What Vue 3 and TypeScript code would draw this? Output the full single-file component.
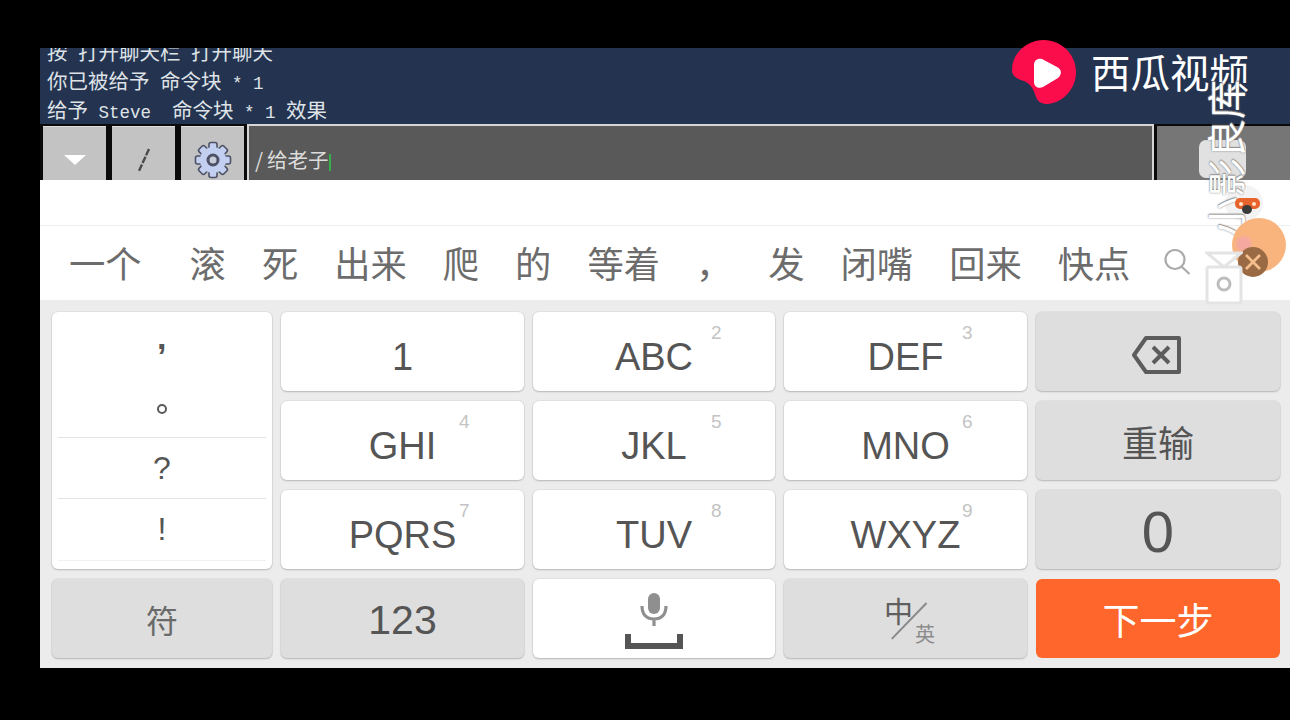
<script setup lang="ts">
interface Cand { t: string; extra?: boolean }
const candidates: Cand[] = [
  { t: '一个', extra: true }, { t: '滚' }, { t: '死' }, { t: '出来' }, { t: '爬' }, { t: '的' },
  { t: '等着' }, { t: '，' }, { t: '发' }, { t: '闭嘴' }, { t: '回来' }, { t: '快点' }
]
interface K { label: string; num?: string }
const row1: K[] = [{ label: '1' }, { label: 'ABC', num: '2' }, { label: 'DEF', num: '3' }]
const row2: K[] = [{ label: 'GHI', num: '4' }, { label: 'JKL', num: '5' }, { label: 'MNO', num: '6' }]
const row3: K[] = [{ label: 'PQRS', num: '7' }, { label: 'TUV', num: '8' }, { label: 'WXYZ', num: '9' }]
const gear = Array.from({ length: 8 }, (_, i) => i * 45)
</script>

<template>
  <div class="page">
    <div class="screen">
      <section class="game">
        <div class="chat">
          <div class="line">按<span class="la">&nbsp;</span>打开聊天栏<span class="la">&nbsp;</span>打开聊天</div>
          <div class="line">你已被给予<span class="la">&nbsp;</span>命令块<span class="la">&nbsp;*&nbsp;1</span></div>
          <div class="line">给予<span class="la">&nbsp;Steve&nbsp;&nbsp;</span>命令块<span class="la">&nbsp;*&nbsp;1&nbsp;</span>效果</div>
        </div>
        <div class="toolbar">
          <div class="mc-btn">
            <svg width="24" height="12" viewBox="0 0 24 12"><path d="M1 1h22L12 11z" fill="#fff" /></svg>
          </div>
          <div class="mc-btn">
            <svg width="14" height="26" viewBox="0 0 14 26"><path d="M12 2 2 24" stroke="#4a4a4a" stroke-width="2.4" stroke-dasharray="7 1.5" /></svg>
          </div>
          <div class="mc-btn">
            <svg width="38" height="38" viewBox="0 0 38 38">
              <g fill="#c3cff0" stroke="#4d5166" stroke-width="1.6">
                <rect v-for="a in gear" :key="a" x="15" y="1.5" width="8" height="8" rx="2" :transform="`rotate(${a} 19 19)`" />
              </g>
              <circle cx="19" cy="19" r="13" fill="#c3cff0" />
              <circle cx="19" cy="19" r="5" fill="#c8ccd8" stroke="#4d5166" stroke-width="3" />
            </svg>
          </div>
          <div class="input"><span class="sl">/</span>给老子<span class="caret"></span></div>
          <div class="send"></div>
        </div>
      </section>

      <section class="keyboard">
        <div class="preedit"></div>
        <div class="candidates">
          <span v-for="c in candidates" :key="c.t" class="cand" :class="{ first: c.extra }">{{ c.t }}</span>
          <svg class="search" width="30" height="30" viewBox="0 0 30 30" fill="none" stroke="#a9a9a9" stroke-width="2.2">
            <circle cx="13" cy="12.5" r="9.5" /><path d="m20 20 7.5 7" />
          </svg>
        </div>
        <div class="keys">
          <div class="key light punct">
            <div class="p-top"><span class="p-comma">,</span><span class="p-dot" aria-label="。"></span></div>
            <div class="p-cell">?</div>
            <div class="p-cell last">!</div>
          </div>
          <div v-for="k in row1" :key="k.label" class="key light">
            <span class="label">{{ k.label }}</span><span v-if="k.num" class="num">{{ k.num }}</span>
          </div>
          <div class="key dark">
            <svg class="back" width="50" height="38" viewBox="0 0 50 38" fill="none" stroke="#5c5c5c" stroke-width="4">
              <path d="M14 2h33v34H14L2 19z" stroke-linejoin="round" /><path d="m21 11 16 16M37 11 21 27" />
            </svg>
          </div>
          <div v-for="k in row2" :key="k.label" class="key light">
            <span class="label">{{ k.label }}</span><span class="num">{{ k.num }}</span>
          </div>
          <div class="key dark cjk">重输</div>
          <div v-for="k in row3" :key="k.label" class="key light">
            <span class="label">{{ k.label }}</span><span class="num">{{ k.num }}</span>
          </div>
          <div class="key dark zero">0</div>
          <div class="key dark cjk small">符</div>
          <div class="key dark big">123</div>
          <div class="key light mic">
            <svg width="58" height="56" viewBox="0 0 58 56">
              <rect x="23" y="0" width="12" height="21" rx="6" fill="#8f8f8f" />
              <path d="M17 13c0 9 5 13 12 13s12-4 12-13M29 26v7" fill="none" stroke="#8f8f8f" stroke-width="3.2" />
              <path d="M3 41v12h52V41" fill="none" stroke="#555" stroke-width="6" />
            </svg>
          </div>
          <div class="key dark lang">
            <span class="zh">中</span><span class="slash"></span><span class="en">英</span>
          </div>
          <div class="key next">下一步</div>
        </div>
      </section>

      <div class="logo-mark">
        <svg width="66" height="66" viewBox="0 0 66 66">
          <path d="M33 0c17 0 32 14 32 32 0 17-13 31-29 32-5 0-9-2-11-7-2-7-5-13-12-16C6 39 1 36 1 30 1 13 16 0 33 0z" fill="#fb0d4c" />
          <path d="M23 25c0-5 4-7 8-6l15 8c5 2 5 8 1 11l-15 9c-4 2-9 0-9-5z" fill="#fff" />
        </svg>
      </div>
      <div class="logo-text">西瓜视频</div>
      <div class="side-box"></div>
      <div class="robot-blob"></div>
      <div class="side-text">小影良库</div>
      <div class="orb"></div>
      <div class="robot"><i></i><i></i></div>
      <div class="robot-eye"></div>
      <div class="orb-x">
        <svg width="28" height="28" viewBox="0 0 28 28" fill="none" stroke="#f6bd8d" stroke-width="2.8"><path d="m7 7 14 14M21 7 7 21" /></svg>
      </div>
      <div class="box">
        <svg width="38" height="54" viewBox="0 0 38 54" fill="none" stroke="#e4e4e4" stroke-width="3">
          <path d="M2 2h34L19 16z" fill="#fff" /><rect x="2" y="16" width="34" height="36" rx="2" fill="#fff" /><circle cx="19" cy="33" r="6" stroke="#bdbdbd" />
        </svg>
      </div>
    </div>
  </div>
</template>

<style>
html, body { margin: 0; background: #000; }
</style>

<style scoped>
.page {
  width: 1290px;
  height: 720px;
  background: #000;
  padding: 48px 0 52px 40px;
  box-sizing: border-box;
  overflow: hidden;
  font-family: "Liberation Sans", "Noto Sans CJK SC", sans-serif;
}
.screen { position: relative; width: 1250px; height: 620px; overflow: visible; }
.game { height: 132px; background: #000; overflow: hidden; }
.chat {
  height: 76px;
  background: #24334f;
  overflow: hidden;
  display: flex;
  flex-direction: column;
  justify-content: flex-end;
  padding: 0 0 0 7px;
  box-sizing: border-box;
  color: #dfe3e8;
  font-family: "Noto Sans CJK SC", sans-serif;
  font-size: 20.5px;
  white-space: pre;
}
.la { font-family: "Liberation Mono", monospace; font-size: 17.5px; }
.line { height: 29px; line-height: 28px; flex: none; }
.toolbar { display: flex; height: 56px; background: #0a0a0a; padding-left: 3px; }
.mc-btn {
  width: 63px;
  height: 54px;
  margin: 2px 6px 0 0;
  background: #c3c3c3;
  display: flex;
  align-items: center;
  justify-content: center;
  box-sizing: border-box;
  padding-top: 12px;
  border-top: 1px solid #dedede;
}
.input {
  width: 907px;
  margin-left: -3px;
  background: #595959;
  border: 2px solid #d5d5d5;
  border-bottom: none;
  box-sizing: border-box;
  color: #dcdcdc;
  font-family: "Noto Sans CJK SC", sans-serif;
  font-size: 20.5px;
  padding: 19px 0 0 6px;
  line-height: 28px;
}
.sl { margin-right: 4px; }
.caret { display: inline-block; width: 2px; height: 17px; background: #34b04a; vertical-align: -3px; }
.send { width: 133px; margin: 2px 0 0 3px; background: #767676; }
.keyboard { height: 488px; background: #ececec; display: flex; flex-direction: column; }
.preedit { height: 45px; background: #fff; border-bottom: 1px solid #eeeeee; flex: none; }
.candidates {
  height: 74px;
  background: #fff;
  display: flex;
  align-items: center;
  gap: 36px;
  padding: 0 0 0 29px;
  flex: none;
  position: relative;
}
.cand { font-size: 36.3px; color: #6c6c6c; line-height: 74px; font-family: "Noto Sans CJK SC", sans-serif; font-weight: 400; white-space: nowrap; margin-top: -3px; }
.cand.first { margin-right: 12px; }
.search { margin-left: -4px; margin-top: -3px; }
.keys {
  display: grid;
  grid-template-columns: 220px 243px 242px 243px 244px;
  grid-template-rows: repeat(4, 79px);
  column-gap: 9px;
  row-gap: 10px;
  padding: 12px 0 0 12px;
}
.key {
  position: relative;
  border-radius: 6px;
  display: flex;
  align-items: center;
  justify-content: center;
  color: #555;
  box-shadow: 0 0 0 1px rgba(0, 0, 0, 0.04), 0 1px 2px rgba(0, 0, 0, 0.2);
}
.light { background: #fff; }
.dark { background: #dedede; }
.label { font-size: 38px; line-height: 1; padding-top: 10px; }
.num { position: absolute; left: 178px; top: 11px; font-size: 19px; line-height: 20px; color: #c4c4c4; }
.punct { grid-row: span 3; flex-direction: column; align-items: stretch; justify-content: flex-start; padding: 0 6px; }
.p-top { height: 125px; border-bottom: 1px solid #e4e4e4; position: relative; flex: none; }
.p-comma { position: absolute; left: 99px; top: 6px; font-size: 34px; line-height: 38px; font-weight: 700; color: #555; }
.p-dot { position: absolute; left: 99px; top: 92px; width: 6px; height: 6px; border: 2px solid #5a5a5a; border-radius: 50%; }
.p-cell { height: 60px; flex: none; border-bottom: 1px solid #e4e4e4; display: flex; align-items: center; justify-content: center; font-size: 32px; color: #555; }
.p-cell.last { height: 61px; border-bottom-color: #f0f0f0; }
.back { margin: 6px 2px 0 0; }
.cjk { font-family: "Noto Sans CJK SC", sans-serif; font-size: 36px; font-weight: 400; }
.small { font-size: 32px; color: #6a6a6a; }
.zero { font-size: 58px; padding-top: 4px; }
.big { font-size: 41px; padding-top: 4px; }
.mic { padding-top: 4px; }
.lang { display: block; }
.zh { position: absolute; left: 100px; top: 15px; font-size: 29px; line-height: 32px; font-family: "Noto Sans CJK SC", sans-serif; color: #5f5f5f; }
.en { position: absolute; left: 131px; top: 43px; font-size: 20px; line-height: 24px; font-family: "Noto Sans CJK SC", sans-serif; color: #8b8b8b; }
.slash { position: absolute; left: 100px; top: 41px; width: 50px; height: 1.5px; background: #8a8a8a; transform: rotate(-46deg); }
.next { background: #ff662b; color: #fff; font-family: "Noto Sans CJK SC", sans-serif; font-size: 37px; font-weight: 400; box-shadow: none; }
.logo-mark { position: absolute; left: 971px; top: -8px; width: 66px; height: 66px; }
.logo-text { position: absolute; left: 1051px; top: 0; color: #fff; font-family: "Noto Sans CJK SC", sans-serif; font-weight: 400; font-size: 39.5px; line-height: 46px; white-space: nowrap; }
.side-box { position: absolute; left: 1159px; top: 92px; width: 47px; height: 38px; border-radius: 7px; background: rgba(255, 255, 255, 0.78); }
.robot-blob { position: absolute; left: 1185px; top: 137px; width: 38px; height: 36px; border-radius: 50%; background: #f3f3f3; }
.side-text {
  position: absolute;
  left: 1162px;
  top: 32px;
  height: 156px;
  width: 44px;
  writing-mode: vertical-rl;
  text-orientation: sideways;
  transform: rotate(180deg);
  color: #fff;
  font-family: "Noto Sans CJK SC", sans-serif;
  font-size: 39px;
  font-weight: 400;
  line-height: 44px;
  text-shadow: 0 0 2px #777, 1px 0 1px #999;
  white-space: nowrap;
}
.robot { position: absolute; left: 1195px; top: 150px; width: 25px; height: 11px; border-radius: 5px; background: #e8642c; display: flex; align-items: center; justify-content: space-between; padding: 0 4px; box-sizing: border-box; }
.robot i { width: 4px; height: 4px; border-radius: 50%; background: #ffe3c8; }
.robot-eye { position: absolute; left: 1202px; top: 157px; width: 10px; height: 9px; border-radius: 50%; background: #3a3a3a; }
.orb { position: absolute; left: 1192px; top: 170px; width: 54px; height: 54px; border-radius: 50%; background: radial-gradient(circle at 22% 48%, #f4a8a0 0 10%, #f9b47e 20%); }
.orb-x { position: absolute; left: 1198px; top: 199px; width: 30px; height: 30px; border-radius: 50%; background: #9a6a44; display: flex; align-items: center; justify-content: center; }
.box { position: absolute; left: 1165px; top: 203px; width: 38px; height: 54px; }
</style>
